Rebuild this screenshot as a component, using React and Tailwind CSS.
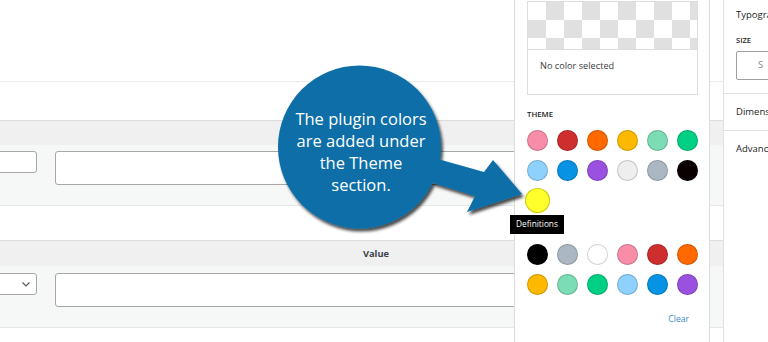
import React from "react";

const themeColors = [
  "bg-[#f78da7]", "bg-[#cf2e2e]", "bg-[#ff6900]", "bg-[#fcb900]", "bg-[#7bdcb5]", "bg-[#00d084]",
  "bg-[#8ed1fc]", "bg-[#0693e3]", "bg-[#9b51e0]", "bg-[#eeeeee]", "bg-[#abb8c3]", "bg-[#0a0000]",
];
const defaultColors = [
  "bg-[#000000]", "bg-[#abb8c3]", "bg-[#ffffff]", "bg-[#f78da7]", "bg-[#cf2e2e]", "bg-[#ff6900]",
  "bg-[#fcb900]", "bg-[#7bdcb5]", "bg-[#00d084]", "bg-[#8ed1fc]", "bg-[#0693e3]", "bg-[#9b51e0]",
];

function Swatch({ c, extra = "" }) {
  return (
    <div
      className={`w-[21px] h-[21px] rounded-full ${c} shadow-[inset_0_0_0_1px_rgba(0,0,0,0.18)] ${extra}`}
    />
  );
}

function Input({ className = "" }) {
  return <div className={`bg-white border border-[#a7a7a7] rounded-[3px] ${className}`} />;
}

export default function App() {
  return (
    <div className="relative w-[768px] h-[342px] overflow-hidden bg-white flex font-['Open_Sans',sans-serif] text-[#1e1e1e]">
      {/* main */}
      <div className="w-[723px] shrink-0 flex flex-col">
        <div className="h-[82px] shrink-0 border-b border-[#ececec]" />
        <div className="h-[38px] shrink-0" />
        {/* table 1 */}
        <div className="h-[25px] shrink-0 border-t border-[#dcdcdc] bg-[#f0f0f0]" />
        <div className="h-[61px] shrink-0 bg-[#f6f7f7] border-b border-[#e6e6e6] flex items-start pt-[6px]">
          <Input className="-ml-[10px] w-[47px] h-[22px]" />
          <Input className="ml-[18px] w-[600px] h-[34px]" />
        </div>
        <div className="h-[34px] shrink-0" />
        {/* table 2 */}
        <div className="h-[26px] shrink-0 border-t border-[#dcdcdc] bg-[#f0f0f0] flex items-center">
          <div className="w-[55px]" />
          <div className="w-[642px] text-center text-[9.3px] font-bold text-[#3c434a] leading-[12px]">Value</div>
        </div>
        <div className="h-[62px] shrink-0 bg-[#f6f7f7] border-b border-[#e6e6e6] flex items-start pt-[7px]">
          <div className="-ml-[10px] w-[47px] h-[22px] bg-white border border-[#a7a7a7] rounded-[3px] flex items-center justify-end pr-[6px]">
            <svg width="8" height="5" viewBox="0 0 8 5">
              <polyline points="0.5,0.5 4,4 7.5,0.5" fill="none" stroke="#50575e" strokeWidth="1.1" />
            </svg>
          </div>
          <Input className="ml-[18px] w-[600px] h-[34px]" />
        </div>
      </div>

      {/* sidebar */}
      <div className="w-[45px] shrink-0 border-l border-[#e0e0e0] overflow-hidden">
        <div className="w-[260px]">
          <div className="pl-[12px] pt-[9px] pb-[13px] border-b border-[#e0e0e0]">
            <div className="text-[9.5px] leading-[12px] font-medium">Typography</div>
            <div className="mt-[14px] text-[7.6px] leading-[10px] font-semibold uppercase">Size</div>
            <div className="mt-[6px] w-[200px] h-[29px] border border-[#a0a0a0] rounded-[2px] flex items-center pl-[21px] text-[9.5px] text-[#8a8a8a]">
              S
            </div>
          </div>
          <div className="h-[37px] pl-[12px] flex items-center border-b border-[#e0e0e0] text-[9.5px] font-medium">
            Dimensions
          </div>
          <div className="pl-[12px] pt-[12px] text-[9.5px] leading-[12px] font-medium">Advanced</div>
        </div>
      </div>

      {/* color popover */}
      <div className="absolute left-[514px] top-0 w-[196px] h-[342px] bg-white border-x border-[#dcdcdc] pl-[12px]">
        <div className="mt-[1px] w-[171px] border border-[#dddddd]">
          <div className="h-[48px] bg-[image:repeating-conic-gradient(#e0e0e0_0_25%,#ffffff_0_50%)] bg-[length:36px_36px] border-b border-[#dddddd]" />
          <div className="h-[44px] pl-[12px] pt-[10px] text-[9.2px] leading-[12px] text-[#3c3c3c]">No color selected</div>
        </div>
        <div className="mt-[14px] text-[7.8px] leading-[10px] font-semibold uppercase text-[#1e1e1e]">Theme</div>
        <div className="mt-[11px] grid grid-cols-[repeat(6,21px)] gap-x-[9px] gap-y-[9px]">
          {themeColors.map((c, i) => (
            <Swatch key={i} c={c} />
          ))}
          <Swatch c="bg-[#ffff2b]" extra="scale-[1.2] shadow-[inset_0_0_0_1px_rgba(120,120,0,0.35)]" />
        </div>
        <div className="h-[33px]" />
        <div className="grid grid-cols-[repeat(6,21px)] gap-x-[9px] gap-y-[9px]">
          {defaultColors.map((c, i) => (
            <Swatch key={i} c={c} />
          ))}
        </div>
        <div className="mt-[18px] w-[171px] flex justify-end pr-[9px] text-[8.6px] leading-[12px] text-[#3a8ccb]">
          Clear
        </div>
      </div>

      {/* tooltip */}
      <div className="absolute left-[510px] top-[215px] w-[54px] h-[19px] bg-black text-white text-[8.3px] flex items-center justify-center">
        Definitions
      </div>

      {/* callout drawing */}
      <svg className="absolute left-0 top-0 pointer-events-none" width="768" height="342" viewBox="0 0 768 342">
        <defs>
          <filter id="sh" x="-20%" y="-20%" width="140%" height="140%">
            <feDropShadow dx="2" dy="3" stdDeviation="1.8" floodColor="#000" floodOpacity="0.7" />
          </filter>
        </defs>
        <g filter="url(#sh)" fill="#0b6ea8">
          <circle cx="359.5" cy="147" r="81.5" />
          <polygon points="420,154 484,172 493,160 522,194 467,212 475,196 420,179" />
        </g>
      </svg>
      <div className="absolute left-[278px] top-[108px] w-[166px] flex flex-col items-center text-white text-[16.5px] leading-[22px] pointer-events-none">
        <div>The plugin colors</div>
        <div>are added under</div>
        <div>the Theme</div>
        <div>section.</div>
      </div>
    </div>
  );
}
